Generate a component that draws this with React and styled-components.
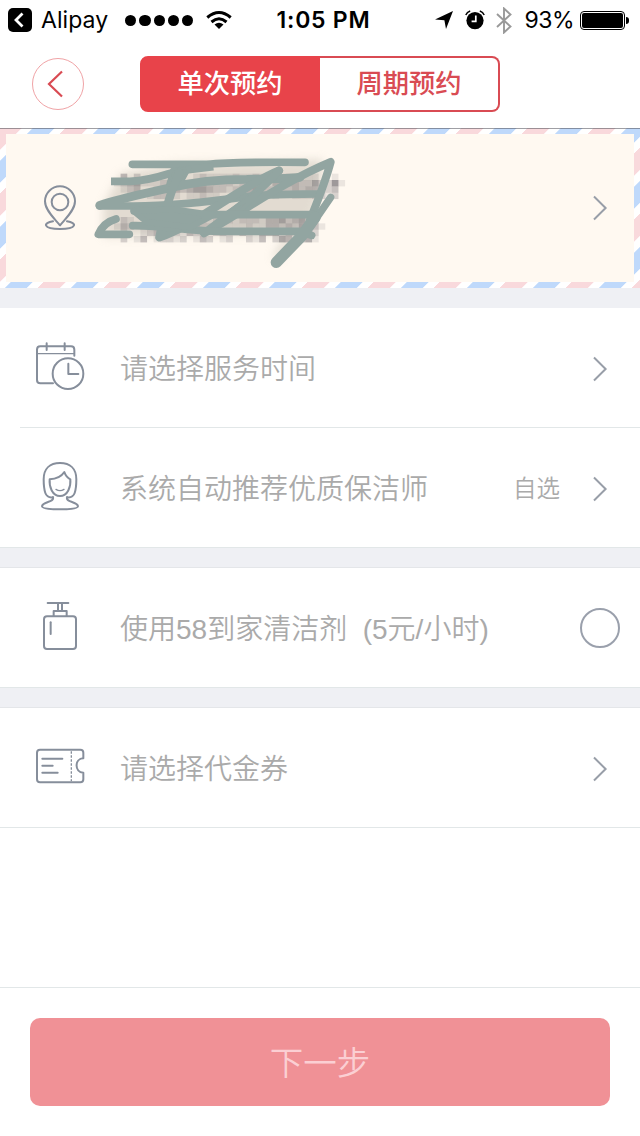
import React from 'react';
import styled, { createGlobalStyle } from 'styled-components';

const red = '#e8434a';
const slate = '#868e9b';
const cjk = '"Noto Sans CJK SC", sans-serif';

const GlobalStyle = createGlobalStyle`
  * { box-sizing: border-box; }
  body { margin: 0; background: #fff; font-family: "Liberation Sans", ${cjk}; }
  button { font: inherit; padding: 0; margin: 0; cursor: pointer; }
  svg { display: block; flex: none; }
`;

const Screen = styled.main`
  width: 640px;
  height: 1136px;
  display: flex;
  flex-direction: column;
  background: #fff;
  overflow: hidden;
`;

const StatusBar = styled.div`
  height: 40px;
  display: grid;
  grid-template-columns: 1fr auto 1fr;
  align-items: center;
  padding: 0 11px 0 8px;
  font-family: Inter, sans-serif;
  color: #000;
  white-space: nowrap;
`;

const StatusGroup = styled.div`
  display: flex;
  align-items: center;
  justify-content: ${(p) => (p.$end ? 'flex-end' : 'flex-start')};
`;

const StatusText = styled.span`
  font-size: 23px;
  font-weight: ${(p) => p.$weight || 400};
  letter-spacing: ${(p) => p.$track || 0}px;
  margin-left: ${(p) => p.$left || 0}px;
  line-height: 40px;
`;

const StatusIcons = styled.div`
  display: flex;
  align-items: center;
  gap: 11.5px;
`;

const Signal = styled.div`
  display: flex;
  gap: 3px;
  margin: 1px 13px 0 17px;
`;

const Dot = styled.i`
  width: 11.2px;
  height: 11.2px;
  border-radius: 50%;
  background: #000;
`;

const Battery = styled.div`
  width: 45px;
  height: 19px;
  margin: 1px 0 0 6px;
  border: 1.5px solid #000;
  border-radius: 4px;
  padding: 1px;
  display: flex;
  &::before { content: ''; flex: 1; background: #000; border-radius: 2px; }
`;

const BatteryTip = styled.i`
  width: 3px;
  height: 7px;
  margin-left: 1px;
  background: #000;
  border-radius: 0 3px 3px 0;
`;

const NavBar = styled.header`
  height: 88px;
  display: flex;
  align-items: center;
  padding: 0 32px;
`;

const BackButton = styled.button`
  width: 52px;
  height: 52px;
  border: 1px solid #f0a3a6;
  border-radius: 50%;
  background: #fff;
  display: grid;
  place-items: center;
`;

const Segments = styled.div`
  width: 360px;
  height: 56px;
  margin-left: 56px;
  display: flex;
`;

const Segment = styled.button`
  width: 50%;
  border: 2px solid ${(p) => (p.$active ? red : '#d94b53')};
  border-radius: ${(p) => (p.$active ? '8px 0 0 8px' : '0 8px 8px 0')};
  ${(p) => !p.$active && 'border-left: 0;'}
  font-family: ${cjk};
  font-size: 26.3px;
  font-weight: 500;
  line-height: 48px;
  padding: 0 0 4px;
  background: ${(p) => (p.$active ? red : '#fff')};
  color: ${(p) => (p.$active ? '#fff' : '#d94b53')};
`;

const AddressCard = styled.section`
  height: 160px;
  padding: 6px;
  background: repeating-linear-gradient(
    135deg,
    #f9d9dc 0 15.2px,
    #fff 15.7px 23px,
    #bfd9fb 23.5px 38.5px,
    #fff 39px 46.4px,
    #f9d9dc 46.67px
  );
  box-shadow: inset 0 1px rgba(80, 80, 90, 0.55);
`;

const AddressBody = styled.div`
  height: 148px;
  display: flex;
  align-items: center;
  padding: 0 26px 0 28px;
  background: #fff9f1;
`;

const Gap = styled.div`
  height: 20px;
  flex: none;
  background: #eff0f4;
  border-bottom: ${(p) => (p.$plain ? 0 : 1)}px solid #e4e6e9;
`;

const Row = styled.div`
  height: 120px;
  display: flex;
  align-items: center;
  padding: 0 ${(p) => p.$right || 32}px 0 34px;
  border-bottom: 1px solid #e2e7e8;
  ${(p) => p.$inset && `
    border-bottom: 0;
    background: linear-gradient(#e2e7e8, #e2e7e8) 20px 100% / 620px 1px no-repeat;
    padding-bottom: 1px;
  `}
`;

const Label = styled.span`
  flex: 1;
  margin-left: 34px;
  padding-top: 4px;
  font-family: "Liberation Sans", ${cjk};
  font-size: 28px;
  font-weight: 350;
  line-height: 40px;
  color: #aaa;
  white-space: pre;
`;

const Choice = styled.span`
  font-family: ${cjk};
  font-size: 23.5px;
  font-weight: 350;
  line-height: 40px;
  padding-bottom: 2px;
  color: #aaa;
  margin-right: 32px;
`;

const Radio = styled.button`
  width: 40px;
  height: 40px;
  margin-top: 1px;
  border: 2px solid #9aa0ac;
  border-radius: 50%;
  background: #fff;
`;

const Footer = styled.footer`
  margin-top: auto;
  height: 149px;
  border-top: 1px solid #e2e7e8;
  padding: 30px;
`;

const NextButton = styled.button`
  width: 100%;
  height: 88px;
  border: 0;
  border-radius: 10px;
  background: #f09196;
  color: #fbcfd3;
  font-family: ${cjk};
  font-size: 33.5px;
  font-weight: 350;
  padding-bottom: 4px;
`;

const IconArt = styled.svg`
  width: 52px;
  height: 52px;
  fill: none;
  stroke: ${slate};
  stroke-width: 6;
  stroke-linecap: round;
  stroke-linejoin: round;
`;

const ChevronArt = styled.svg`
  width: 16px;
  height: 28px;
  margin-top: ${(p) => p.$top || 0}px;
  fill: none;
  stroke: #989ea8;
  stroke-width: 2;
`;

const ScribbleArt = styled.svg`
  width: 286px;
  height: 136px;
  margin: 0 auto 0 -2px;
`;

const Chevron = ({ top }) => (
  <ChevronArt viewBox="0 0 16 28" $top={top}>
    <path d="M2 2.5 13.6 14 2 25.5" />
  </ChevronArt>
);

const PinIcon = () => (
  <IconArt viewBox="102 186 156 156">
    <path d="M180 316C166 298 135 272 135 244A45 45 0 0 1 225 244C225 272 194 298 180 316Z" />
    <circle cx="180" cy="246" r="25" />
    <path d="M159 304C128 308 128 327 180 327S232 308 201 304" />
  </IconArt>
);

const CalendarIcon = () => (
  <IconArt viewBox="42 66 156 156">
    <path d="M99 190H61Q51 190 51 180V89Q51 79 61 79H153Q163 79 163 89V107" />
    <path d="M51 101H163" strokeWidth="4" />
    <path d="M80 70V90M134 70V90" />
    <circle cx="144" cy="161" r="46" />
    <path d="M145 131V162H175" />
  </IconArt>
);

const PersonIcon = () => (
  <IconArt viewBox="42 426 156 156">
    <path d="M99 532C86 534 79 527 76 519C71 505 71 490 71 478C71 446 90 429 120 429S169 446 169 478C169 490 169 505 164 519C161 527 154 534 141 532" />
    <path d="M89 478C108 477 124 470 133 456C137 468 143 474 151 478C153 500 143 528 120 528S87 500 89 478Z" />
    <path d="M108 508Q120 516 132 508" strokeWidth="4" />
    <path d="M99 532C101 541 93 543 84 546C73 550 66 553 66 559C66 566 92 568 120 568S174 566 174 559C174 553 167 550 156 546C147 543 139 541 141 532" />
  </IconArt>
);

const BottleIcon = () => (
  <IconArt viewBox="42 36 156 156">
    <rect x="72" y="79" width="96" height="98" rx="9" />
    <path d="M101 78V63H140V78M114 61V41M126 61V41M83 39H145" />
    <path d="M92 97V132" />
  </IconArt>
);

const TicketIcon = () => (
  <IconArt viewBox="42 456 156 156">
    <path d="M60 479H181Q190 479 190 488V505C163 506 163 547 190 548V568Q190 577 181 577H60Q51 577 51 568V488Q51 479 60 479Z" />
    <path d="M67 506H127M67 527H98M67 548H113" />
    <path d="M154 484V574" strokeWidth="4" strokeDasharray="7 5" strokeLinecap="butt" />
  </IconArt>
);

// Grey levels of the pixelated address lines, one digit per cell (0 = clear).
const mosaicTop = [
  '03020001010012111121121111221110010',
  '12341112234333222212432133332242251',
  '01230011232344322122342212232331230',
  '00000122110112110001112010011122120',
];
const mosaicBottom = [
  '021000112211121222122213342342200000',
  '132122231222322211112113323242310000',
  '020012322213221232132143423142200000',
  '020130122120132012002130243034100000',
];

const Mosaic = ({ rows, y }) =>
  rows.map((row, r) =>
    [...row].map((level, c) =>
      level === '0' ? null : (
        <rect
          key={`${r}-${c}`}
          x={102 + c * 19.8}
          y={y + r * 19}
          width="20"
          height="19.2"
          fill="#5d5960"
          opacity={level * 0.12}
        />
      )
    )
  );

const Scribble = () => (
  <ScribbleArt viewBox="12 0 858 408">
    <defs>
      <filter id="halo" x="-10%" y="-20%" width="120%" height="140%">
        <feGaussianBlur stdDeviation="15" />
      </filter>
    </defs>
    <path
      d="M80 200 130 110 290 80 720 70 700 200 590 350 640 270 80 280Z"
      fill="#cfc8bc"
      stroke="#cfc8bc"
      strokeWidth="20"
      strokeLinejoin="round"
      opacity="0.6"
      filter="url(#halo)"
    />
    <Mosaic rows={mosaicTop} y={101} />
    <Mosaic rows={mosaicBottom} y={231} />
    <g fill="none" stroke="#92a5a1" strokeWidth="23" strokeLinecap="round" strokeLinejoin="round">
      <path d="M157 73H380C450 66 560 66 675 67" />
      <path d="M93 124H150C230 120 265 98 300 92L400 80" strokeLinecap="butt" />
      <path d="M275 88 330 84 300 140 262 135Z" fill="#92a5a1" strokeWidth="8" />
      <path d="M59 196C130 172 200 160 270 143C340 126 420 118 500 118C580 116 620 116 660 112" strokeWidth="26" />
      <path d="M59 198H160C290 198 400 184 500 170C580 160 650 163 715 162" />
      <path d="M298 98C280 135 258 200 238 292C350 255 470 145 597 92" strokeWidth="25" />
      <path d="M597 92C530 165 450 220 372 280C500 210 600 130 752 66C735 130 710 190 690 240" strokeWidth="24" />
      <path d="M420 232 545 150 480 215Z" fill="#92a5a1" strokeWidth="12" />
      <path d="M162 213C250 200 280 225 370 224H700" />
      <path d="M158 257C250 255 330 275 430 274H660L695 286" />
      <path d="M162 214 280 208 400 225 330 262 200 246Z" fill="#92a5a1" strokeWidth="18" />
      <path d="M752 172 690 262 590 367" strokeWidth="22" />
      <path d="M705 232 665 288 589 367" strokeWidth="34" />
      <path d="M108 237C82 244 65 260 55 283H148" />
    </g>
  </ScribbleArt>
);

export default function App() {
  return (
    <Screen>
      <GlobalStyle />
      <StatusBar>
        <StatusGroup>
          <svg width="24" height="24" viewBox="0 0 24 24">
            <rect width="24" height="24" rx="5" />
            <path d="M14.5 5.5 8 12l6.5 6.5" fill="none" stroke="#fff" strokeWidth="2.8" />
          </svg>
          <StatusText $left={9} $track={0.05}>Alipay</StatusText>
          <Signal>
            {[0, 1, 2, 3, 4].map((n) => <Dot key={n} />)}
          </Signal>
          <svg width="26" height="20" viewBox="0 0 26 20">
            <g fill="none" stroke="#000" strokeWidth="3">
              <path d="M1.3 7.5Q13-2.5 24.7 7.5" />
              <path d="M5.5 12Q13 5.5 20.5 12" />
            </g>
            <path d="M8.5 14.5Q13 10.8 17.5 14.5L13 19Z" />
          </svg>
        </StatusGroup>
        <StatusText $weight={600} $track={0.75} $left={10}>1:05 PM</StatusText>
        <StatusGroup $end>
          <StatusIcons>
            <svg width="18" height="18" viewBox="0 0 18 18">
              <path d="M18 0 11 18 9.4 9.2 0 8.4Z" />
            </svg>
            <svg width="20" height="20" viewBox="0 0 20 20">
              <circle cx="10" cy="10.6" r="8.6" />
              <path d="M.8 5Q2 2 5.2 1M19.2 5Q18 2 14.8 1" fill="none" stroke="#000" strokeWidth="1.5" />
              <path d="M10.8 5.5V11.3H6.6" fill="none" stroke="#fff" strokeWidth="1.7" />
            </svg>
            <svg width="16" height="27" viewBox="0 0 16 27">
              <path d="M1 7 14.5 19.5 8 25.5V1.5L14.5 7.5 1 20" fill="none" stroke="#999" strokeWidth="1.9" />
            </svg>
          </StatusIcons>
          <StatusText $left={12} $track={-0.5}>93%</StatusText>
          <Battery />
          <BatteryTip />
        </StatusGroup>
      </StatusBar>

      <NavBar>
        <BackButton aria-label="返回">
          <svg width="22" height="28" viewBox="0 0 22 28">
            <path d="M15 1.5 2 14 15 26.5" fill="none" stroke="#d94b53" strokeWidth="2.2" />
          </svg>
        </BackButton>
        <Segments>
          <Segment $active>单次预约</Segment>
          <Segment>周期预约</Segment>
        </Segments>
      </NavBar>

      <AddressCard>
        <AddressBody>
          <PinIcon />
          <Scribble />
          <Chevron />
        </AddressBody>
      </AddressCard>

      <Gap $plain />
      <Row $inset>
        <CalendarIcon />
        <Label>请选择服务时间</Label>
        <Chevron top={2} />
      </Row>
      <Row>
        <PersonIcon />
        <Label>系统自动推荐优质保洁师</Label>
        <Choice>自选</Choice>
        <Chevron top={2} />
      </Row>
      <Gap />
      <Row $right={20}>
        <BottleIcon />
        <Label>使用58到家清洁剂  (5元/小时)</Label>
        <Radio aria-label="使用清洁剂" />
      </Row>
      <Gap />
      <Row>
        <TicketIcon />
        <Label>请选择代金券</Label>
        <Chevron top={2} />
      </Row>

      <Footer>
        <NextButton>下一步</NextButton>
      </Footer>
    </Screen>
  );
}
